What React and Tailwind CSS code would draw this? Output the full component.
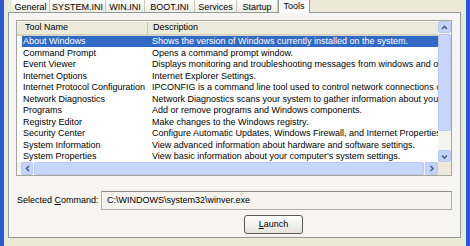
import React from 'react';

const tabs = [
  { label: 'General', w: 38 },
  { label: 'SYSTEM.INI', w: 56 },
  { label: 'WIN.INI', w: 39 },
  { label: 'BOOT.INI', w: 50 },
  { label: 'Services', w: 42 },
  { label: 'Startup', w: 41 },
];

const tools = [
  ['About Windows', 'Shows the version of Windows currently installed on the system.'],
  ['Command Prompt', 'Opens a command prompt window.'],
  ['Event Viewer', 'Displays monitoring and troubleshooting messages from windows and other programs.'],
  ['Internet Options', 'Internet Explorer Settings.'],
  ['Internet Protocol Configuration', 'IPCONFIG is a command line tool used to control network connections on your computer.'],
  ['Network Diagnostics', 'Network Diagnostics scans your system to gather information about your hardware.'],
  ['Programs', 'Add or remove programs and Windows components.'],
  ['Registry Editor', 'Make changes to the Windows registry.'],
  ['Security Center', 'Configure Automatic Updates, Windows Firewall, and Internet Properties settings.'],
  ['System Information', 'View advanced information about hardware and software settings.'],
  ['System Properties', "View basic information about your computer's system settings."],
];

// little chevron drawn inside the XP scroll buttons
const Chevron = ({ dir }) => {
  const d = {
    up: 'M2 6 L4.5 3.5 L7 6',
    down: 'M2 3.5 L4.5 6 L7 3.5',
    left: 'M6 2 L3.5 4.5 L6 7',
    right: 'M3.5 2 L6 4.5 L3.5 7',
  }[dir];
  return (
    <svg width="9" height="9" viewBox="0 0 9 9">
      <path d={d} fill="none" stroke="#4d6185" strokeWidth="1.6" />
    </svg>
  );
};

const ScrollBtn = ({ dir, className = '' }) => (
  <div className={`flex items-center justify-center bg-[#c3d3fd] border border-[#b7c9f4] rounded-[2px] ${className}`}>
    <Chevron dir={dir} />
  </div>
);

export default function App() {
  return (
    <div
      className="w-[470px] h-[246px] overflow-hidden flex bg-[#2957d3] text-[9px] text-black"
      style={{ fontFamily: '"Liberation Sans", Arial, sans-serif' }}
    >
      <div className="ml-[4px] w-[462px] h-full bg-[#ece9d8] flex flex-col">
        {/* tab strip */}
        <div className="h-[12px] flex items-end pl-[8px]">
          {tabs.map((t) => (
            <div
              key={t.label}
              style={{ width: t.w }}
              className="h-[13px] -mb-[1px] flex items-center justify-center border-r border-[#c9c7ba] bg-gradient-to-b from-white to-[#eceae0] leading-none pt-[1px]"
            >
              {t.label}
            </div>
          ))}
          <div className="w-[32px] h-[14px] -mb-[1px] z-10 flex items-start justify-center bg-[#fbfbf9] border-x border-[#919b9c] leading-none pt-[3px]">
            Tools
          </div>
        </div>

        {/* tab page */}
        <div className="ml-[4px] w-[453px] h-[226px] border border-[#919b9c] bg-[#f6f5f1] pl-[7px] pt-[7px] flex flex-col">
          {/* list view */}
          <div className="w-[436px] h-[156px] border border-[#a7a69c] bg-white flex">
            <div className="w-[421px] flex flex-col">
              <div className="h-[14px] mt-[1px] flex items-center bg-[#ebeadb] border-b-2 border-[#d6d2c2] leading-none">
                <div className="w-[131px] h-full flex items-center pl-[8px] border-r border-[#c7c5b2]">Tool Name</div>
                <div className="pl-[5px]">Description</div>
              </div>
              <div className="flex flex-col flex-1">
                {tools.map(([name, desc], i) => (
                  <div
                    key={name}
                    className={`h-[11.5px] ml-[5px] flex items-center whitespace-nowrap overflow-hidden leading-none ${
                      i === 0 ? 'bg-[#316ac5] text-white' : ''
                    }`}
                  >
                    <div className="w-[126px] shrink-0 pl-[1px]">{name}</div>
                    <div className="pl-[4px]">{desc}</div>
                  </div>
                ))}
              </div>
              {/* horizontal scrollbar */}
              <div className="h-[13px] flex bg-[#f3f3ef]">
                <ScrollBtn dir="left" className="w-[12px] h-full ml-[4px]" />
                <div className="flex-1 bg-[#c8d6fb] border border-[#b7c9f4] rounded-[2px] mx-[1px]" />
                <ScrollBtn dir="right" className="w-[13px] h-full" />
              </div>
            </div>
            {/* vertical scrollbar */}
            <div className="w-[13px] flex flex-col bg-[#f3f3ef]">
              <ScrollBtn dir="up" className="h-[12px] w-full" />
              <div className="h-[97px] bg-[#c8d6fb] border border-[#b7c9f4] rounded-[2px] my-[1px]" />
              <div className="flex-1" />
              <ScrollBtn dir="down" className="h-[12px] w-full" />
              <div className="h-[13px] bg-[#ece9d8]" />
            </div>
          </div>

          {/* selected command */}
          <div className="mt-[15px] flex items-center">
            <div className="w-[85px] pl-[1px]">
              Selected <span className="underline">C</span>ommand:
            </div>
            <div className="w-[351px] h-[19px] flex items-center pl-[5px] border border-[#b1afa3] border-t-[#8e8c82] bg-[#f4f3ee]">
              C:\WINDOWS\system32\winver.exe
            </div>
          </div>

          <div className="mt-[5px] pl-[228px]">
            <button className="w-[59px] h-[19px] flex items-center justify-center rounded-[3px] border border-[#5a5a55] bg-gradient-to-b from-white to-[#e6e4d9] text-[9px] leading-none">
              <span className="underline">L</span>aunch
            </button>
          </div>
        </div>
      </div>
      <div className="w-[4px] h-full bg-[#2957d3]" />
    </div>
  );
}
